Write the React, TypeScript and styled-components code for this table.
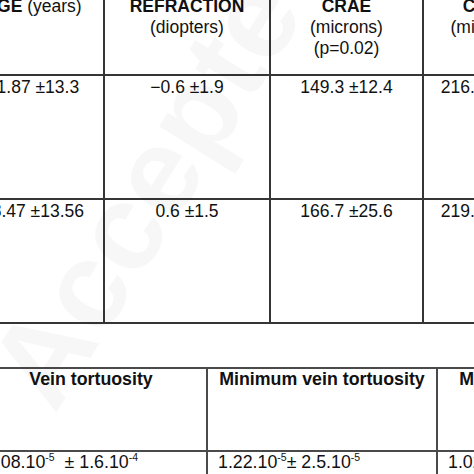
import React from "react";
import styled, { createGlobalStyle } from "styled-components";

const Global = createGlobalStyle`
  html, body { margin: 0; padding: 0; background: #ffffff; }
  body { overflow: hidden; font-family: "Liberation Sans", Arial, sans-serif; color: #111111; }
`;

const Page = styled.div`
  position: relative;
  width: 474px;
  height: 474px;
  overflow: hidden;
  background: #ffffff;
  display: flex;
  flex-direction: column;
`;

const Grid = styled.div<{ $cols: string; $rows: string; $ml: number; $mt: number; $line: string }>`
  display: grid;
  grid-template-columns: ${(p) => p.$cols};
  grid-template-rows: ${(p) => p.$rows};
  gap: 2px;
  background: ${(p) => p.$line};
  padding: ${(p) => (p.$mt >= 0 ? "2px 0 2px 0" : "0 0 2px 0")};
  margin-left: ${(p) => p.$ml}px;
  margin-top: ${(p) => p.$mt}px;
  width: max-content;
  flex-shrink: 0;
`;

const HeadCell = styled.div<{ $size: number }>`
  background: #ffffff;
  text-align: center;
  font-size: ${(p) => p.$size}px;
  line-height: 21px;
  padding-top: 0;
  white-space: nowrap;
`;

const DataCell = styled.div<{ $align: "center" | "left"; $size: number; $lh: number }>`
  background: #ffffff;
  text-align: ${(p) => p.$align};
  font-size: ${(p) => p.$size}px;
  line-height: ${(p) => p.$lh}px;
  padding-top: 1px;
  padding-left: ${(p) => (p.$align === "left" ? "10px" : "0")};
  white-space: nowrap;
`;

const Bold = styled.span`
  font-weight: 700;
`;

const Sup = styled.sup`
  font-size: 10.5px;
  line-height: 0;
  vertical-align: 0;
  position: relative;
  top: -7px;
`;

const Watermark = styled.div`
  position: absolute;
  left: -110px;
  top: 90px;
  font-family: "Liberation Sans", Arial, sans-serif;
  font-weight: 700;
  font-size: 122px;
  color: rgba(0, 0, 0, 0.032);
  transform: rotate(-58deg);
  transform-origin: center;
  white-space: nowrap;
  pointer-events: none;
`;

type Head = { bold: string; lines: string[] };

const table1Heads: Head[] = [
  { bold: "AGE", lines: [" (years)"] },
  { bold: "REFRACTION", lines: ["(diopters)"] },
  { bold: "CRAE", lines: ["(microns)", "(p=0.02)"] },
  { bold: "CRVE", lines: ["(microns)"] },
];

const table1Rows: string[][] = [
  ["41.87 ±13.3", "\u22120.6 ±1.9", "149.3 ±12.4", "216.4 ±18.2"],
  ["38.47 ±13.56", "0.6 ±1.5", "166.7 ±25.6", "219.7 ±22.1"],
];

const Exp: React.FC<{ base: string; exp: string; tail?: string }> = ({ base, exp, tail }) => (
  <>
    {base}
    <Sup>{exp}</Sup>
    {tail}
  </>
);

export default function App() {
  return (
    <Page>
      <Global />
      <Grid
        $cols="140px 164px 151px 126px"
        $rows="78px 122px 122px"
        $ml={-37}
        $mt={-4}
        $line="#353535"
      >
        {table1Heads.map((h, i) =>
          i === 0 ? (
            <HeadCell key={i} $size={17.5}>
              <Bold>{h.bold}</Bold>
              {h.lines[0]}
            </HeadCell>
          ) : (
            <HeadCell key={i} $size={17.5}>
              <Bold>{h.bold}</Bold>
              {h.lines.map((l, j) => (
                <div key={j}>{l}</div>
              ))}
            </HeadCell>
          )
        )}
        {table1Rows.map((row, r) =>
          row.map((v, c) => (
            <DataCell key={`${r}-${c}`} $align="center" $size={17.5} $lh={21}>
              {v}
            </DataCell>
          ))
        )}
      </Grid>
      <Grid
        $cols="230px 228px 252px"
        $rows="81px 40px"
        $ml={-24}
        $mt={43}
        $line="#4a4a4a"
      >
        <HeadCell $size={17.8}>
          <Bold>Vein tortuosity</Bold>
        </HeadCell>
        <HeadCell $size={17.8}>
          <Bold>Minimum vein tortuosity</Bold>
        </HeadCell>
        <HeadCell $size={17.8}>
          <Bold>Maximum vein tortuosity</Bold>
        </HeadCell>
        <DataCell $align="left" $size={17.8} $lh={19}>
          <Exp base="1.08.10" exp="-5" tail={"\u00a0 \u00b1 1.6.10"} />
          <Sup>-4</Sup>
        </DataCell>
        <DataCell $align="left" $size={17.8} $lh={19}>
          <Exp base="1.22.10" exp="-5" tail={"\u00b1 2.5.10"} />
          <Sup>-5</Sup>
        </DataCell>
        <DataCell $align="left" $size={17.8} $lh={19}>
          <Exp base="1.02.10" exp="-4" tail={" \u00b1 3.1.10"} />
          <Sup>-4</Sup>
        </DataCell>
      </Grid>
      <Watermark>Accepted</Watermark>
    </Page>
  );
}
